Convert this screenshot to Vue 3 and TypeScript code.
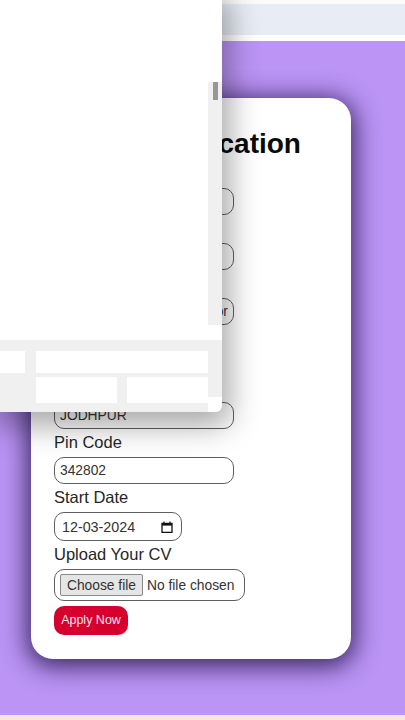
<script setup lang="ts">
interface Field {
  label: string
  value: string
  short?: boolean
}

const fields: Field[] = [
  { label: 'Full Name', value: 'Rahul Sharma' },
  { label: 'Email', value: 'rahul@example.com' },
  { label: 'Position', value: 'Software Developer Mentor' },
  { label: 'Address', value: '', short: true },
  { label: 'City', value: 'JODHPUR' },
  { label: 'Pin Code', value: '342802' },
]
</script>

<template>
  <div class="page">
    <div class="strip"></div>
    <div class="band"></div>
    <div class="gap"></div>
    <main class="stage">
      <form class="card" @submit.prevent>
        <h1 class="title">Job Application</h1>
        <div v-for="field in fields" :key="field.label" class="field">
          <label class="label">{{ field.label }}</label>
          <input class="input" :class="{ short: field.short }" type="text" :value="field.value" />
        </div>
        <div class="field">
          <label class="label">Start Date</label>
          <div class="date">
            <span>12-03-2024</span>
            <svg class="cal" viewBox="0 0 12 12" width="12" height="12" aria-hidden="true">
              <path d="M1 2.5h10v9H1z" fill="none" stroke="#111" stroke-width="1.3" />
              <path d="M1 2h10v2.6H1z" fill="#111" />
              <path d="M3 .5v2M9 .5v2" stroke="#111" stroke-width="1.2" />
            </svg>
          </div>
        </div>
        <div class="field">
          <label class="label">Upload Your CV</label>
          <div class="file">
            <button class="choose" type="button">Choose file</button>
            <span>No file chosen</span>
          </div>
        </div>
        <button class="apply" type="submit">Apply Now</button>
      </form>
    </main>
    <div class="cream"></div>

    <aside class="panel">
      <div class="panel-top">
        <div class="panel-main"></div>
        <div class="rail">
          <div class="track"><div class="thumb"></div></div>
        </div>
      </div>
      <div class="panel-bottom">
        <div class="cell cell-left"></div>
        <div class="cells">
          <div class="cell cell-wide"></div>
          <div class="cell-row">
            <div class="cell cell-half"></div>
            <div class="cell cell-half"></div>
          </div>
        </div>
        <div class="corner"></div>
      </div>
    </aside>
  </div>
</template>

<style>
html,
body {
  margin: 0;
  background: #ffffff;
}
</style>

<style scoped>
.page {
  position: relative;
  width: 405px;
  height: 720px;
  overflow: hidden;
  display: flex;
  flex-direction: column;
  background: #ffffff;
  font-family: "Liberation Sans", Arial, sans-serif;
  color: #222222;
}
.strip {
  height: 4px;
  background: #fbfbfb;
}
.band {
  height: 31px;
  background: #e8edf5;
}
.gap {
  height: 6px;
  background: #ffffff;
}
.stage {
  flex: 1;
  min-height: 0;
  background: #bb94f5;
  padding: 57px 54px 0 31px;
}
.cream {
  height: 5px;
  background: #f8e6d8;
}
.card {
  width: 320px;
  height: 561px;
  box-sizing: border-box;
  padding: 30px 23px 0;
  background: #ffffff;
  border-radius: 22px;
  box-shadow: 0 4px 24px 4px rgba(30, 15, 70, 0.82);
  display: flex;
  flex-direction: column;
  align-items: flex-start;
}
.title {
  margin: 0;
  padding-left: 38px;
  font-size: 28px;
  line-height: 32px;
  font-weight: 700;
  color: #0a0a0a;
  white-space: nowrap;
}
.field {
  display: flex;
  flex-direction: column;
  align-items: flex-start;
}
.label {
  font-size: 16.5px;
  line-height: 26px;
  height: 28px;
  color: #262626;
}
.input {
  width: 180px;
  height: 27px;
  box-sizing: border-box;
  padding: 0 5px;
  border: 1px solid #5f5f5f;
  border-radius: 10px;
  background: #ffffff;
  font-family: inherit;
  font-size: 13.8px;
  color: #333333;
  outline: none;
}
.input.short {
  width: 150px;
  height: 21px;
}
.date {
  width: 128px;
  height: 29px;
  box-sizing: border-box;
  padding: 0 8px 0 7px;
  border: 1px solid #5f5f5f;
  border-radius: 10px;
  display: flex;
  align-items: center;
  justify-content: space-between;
  font-size: 14.3px;
  color: #333333;
}
.cal {
  display: block;
}
.file {
  width: 191px;
  height: 32px;
  box-sizing: border-box;
  padding: 0 5px;
  border: 1px solid #5f5f5f;
  border-radius: 10px;
  display: flex;
  align-items: center;
  gap: 4px;
  font-size: 13.8px;
  color: #333333;
  white-space: nowrap;
}
.choose {
  width: 83px;
  height: 22px;
  flex: none;
  box-sizing: border-box;
  padding: 0;
  border: 1px solid #8a8a8a;
  border-radius: 2px;
  background: #e4e6e6;
  font-family: inherit;
  font-size: 13.8px;
  color: #333333;
}
.apply {
  margin-top: 5px;
  width: 74px;
  height: 29px;
  padding: 0 0 2px;
  border: none;
  border-radius: 10px;
  background: #d6002f;
  color: #fbe3ea;
  font-family: inherit;
  font-size: 12.5px;
}
.panel {
  position: absolute;
  left: 0;
  top: 0;
  width: 222px;
  height: 412px;
  display: flex;
  flex-direction: column;
  background: #ffffff;
  border-bottom-right-radius: 6px;
  overflow: hidden;
}
.page::after {
  content: "";
  position: absolute;
  left: 0;
  top: 0;
  width: 222px;
  height: 412px;
  border-bottom-right-radius: 6px;
  box-shadow: 0 6px 30px 8px rgba(0, 0, 0, 0.34);
  pointer-events: none;
}
.panel-top {
  flex: 1;
  min-height: 0;
  display: flex;
}
.panel-main {
  flex: 1;
}
.rail {
  width: 14px;
  padding: 82px 0 15px;
  box-sizing: border-box;
  display: flex;
}
.track {
  flex: 1;
  background: #f0f0f0;
  display: flex;
  justify-content: center;
  align-items: flex-start;
}
.thumb {
  width: 5px;
  height: 18px;
  background: #999794;
}
.panel-bottom {
  height: 72px;
  box-sizing: border-box;
  padding-top: 11px;
  background: #f0f0f0;
  display: flex;
}
.cell {
  background: #ffffff;
}
.cell-left {
  width: 25px;
  height: 22px;
  margin-right: 11px;
}
.cells {
  width: 172px;
  display: flex;
  flex-direction: column;
  gap: 4px;
}
.cell-wide {
  height: 22px;
}
.cell-row {
  display: flex;
  justify-content: space-between;
}
.cell-half {
  width: 81px;
  height: 26px;
}
.corner {
  width: 14px;
  height: 15px;
  margin-top: 46px;
  background: #ffffff;
}
</style>
